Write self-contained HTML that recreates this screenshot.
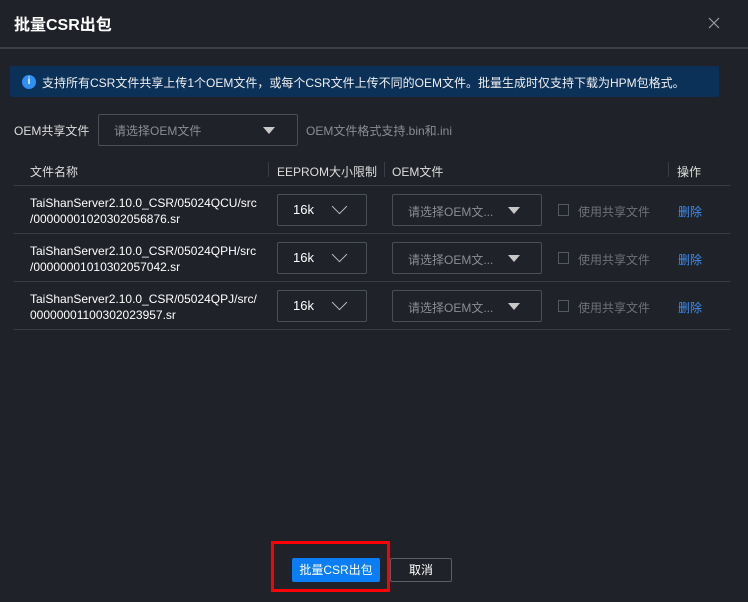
<!DOCTYPE html>
<html><head><meta charset="utf-8"><style>
*{margin:0;padding:0;box-sizing:border-box}
body{width:748px;height:602px;background:#202229;font-family:"Liberation Sans","Noto Sans CJK SC",sans-serif;color:#e8e8e8;position:relative;overflow:hidden;font-size:12px}
.a{position:absolute;white-space:nowrap}
.sel{position:absolute;border:1px solid #4a4e57;border-radius:2px}
.tri{position:absolute;width:0;height:0;border-left:6px solid transparent;border-right:6px solid transparent;border-top:7px solid #c8c8c8}
.hl{position:absolute;left:14px;width:716px;height:1px;background:#3a3d45}
.chev{position:absolute;width:11px;height:11px;border-right:1.5px solid #bbb;border-bottom:1.5px solid #bbb;transform:rotate(45deg)}
</style></head><body>
<div class="a" style="left:14px;top:11px;font-size:16px;font-weight:bold;color:#fff">批量CSR出包</div>
<svg style="position:absolute;left:708px;top:17px" width="12" height="12"><path d="M1 1L11 11M11 1L1 11" stroke="#9a9da4" stroke-width="1.2"/></svg>
<div style="position:absolute;left:0;top:47px;width:748px;height:2px;background:#3c3f47"></div>
<div style="position:absolute;left:10px;top:66px;width:709px;height:31px;background:#0b3158;border-radius:2px"></div>
<div style="position:absolute;left:22px;top:75px;width:14px;height:14px;border-radius:50%;background:#2f8ff5;color:#fff;font-size:10px;font-weight:bold;text-align:center;line-height:14px">i</div>
<div class="a" style="left:42px;top:74px;font-size:12px;color:#f0f0f0">支持所有CSR文件共享上传1个OEM文件，或每个CSR文件上传不同的OEM文件。批量生成时仅支持下载为HPM包格式。</div>
<div class="a" style="left:14px;top:122px;color:#ddd">OEM共享文件</div>
<div class="sel" style="left:98px;top:114px;width:200px;height:32px"></div>
<div class="a" style="left:114px;top:122px;color:#8a8d94">请选择OEM文件</div>
<div class="tri" style="left:263px;top:127px"></div>
<div class="a" style="left:306px;top:122px;color:#8a8d94">OEM文件格式支持.bin和.ini</div>
<div class="a" style="left:30px;top:163px;color:#ddd">文件名称</div>
<div style="position:absolute;left:268px;top:162px;width:1px;height:15px;background:#3a3d45"></div>
<div class="a" style="left:277px;top:163px;color:#ddd">EEPROM大小限制</div>
<div style="position:absolute;left:384px;top:162px;width:1px;height:15px;background:#3a3d45"></div>
<div class="a" style="left:392px;top:163px;color:#ddd">OEM文件</div>
<div style="position:absolute;left:668px;top:162px;width:1px;height:15px;background:#3a3d45"></div>
<div class="a" style="left:677px;top:163px;color:#ddd">操作</div>
<div class="hl" style="top:185px"></div>
<div class="hl" style="top:233px"></div>
<div class="hl" style="top:281px"></div>
<div class="hl" style="top:329px"></div>

<div class="a" style="left:30px;top:195px;line-height:16px;color:#fff">TaiShanServer2.10.0_CSR/05024QCU/src<br>/00000001020302056876.sr</div>
<div class="a" style="left:30px;top:243px;line-height:16px;color:#fff">TaiShanServer2.10.0_CSR/05024QPH/src<br>/00000001010302057042.sr</div>
<div class="a" style="left:30px;top:291px;line-height:16px;color:#fff">TaiShanServer2.10.0_CSR/05024QPJ/src/<br>00000001100302023957.sr</div>

<div class="sel" style="left:277px;top:194px;width:90px;height:32px"></div>
<div class="sel" style="left:277px;top:242px;width:90px;height:32px"></div>
<div class="sel" style="left:277px;top:290px;width:90px;height:32px"></div>
<div class="a" style="left:293px;top:202px;font-size:13px;color:#fff">16k</div>
<div class="a" style="left:293px;top:250px;font-size:13px;color:#fff">16k</div>
<div class="a" style="left:293px;top:298px;font-size:13px;color:#fff">16k</div>
<div class="chev" style="left:334px;top:201px"></div>
<div class="chev" style="left:334px;top:249px"></div>
<div class="chev" style="left:334px;top:297px"></div>

<div class="sel" style="left:392px;top:194px;width:150px;height:32px"></div>
<div class="sel" style="left:392px;top:242px;width:150px;height:32px"></div>
<div class="sel" style="left:392px;top:290px;width:150px;height:32px"></div>
<div class="a" style="left:408px;top:203px;color:#8a8d94">请选择OEM文...</div>
<div class="a" style="left:408px;top:251px;color:#8a8d94">请选择OEM文...</div>
<div class="a" style="left:408px;top:299px;color:#8a8d94">请选择OEM文...</div>
<div class="tri" style="left:508px;top:207px"></div>
<div class="tri" style="left:508px;top:255px"></div>
<div class="tri" style="left:508px;top:303px"></div>

<div style="position:absolute;left:558px;top:204px;width:11px;height:12px;border:1px solid #555961"></div>
<div style="position:absolute;left:558px;top:252px;width:11px;height:12px;border:1px solid #555961"></div>
<div style="position:absolute;left:558px;top:300px;width:11px;height:12px;border:1px solid #555961"></div>
<div class="a" style="left:578px;top:203px;color:#6e7179">使用共享文件</div>
<div class="a" style="left:578px;top:251px;color:#6e7179">使用共享文件</div>
<div class="a" style="left:578px;top:299px;color:#6e7179">使用共享文件</div>
<div class="a" style="left:678px;top:203px;color:#3d8ef0">删除</div>
<div class="a" style="left:678px;top:251px;color:#3d8ef0">删除</div>
<div class="a" style="left:678px;top:299px;color:#3d8ef0">删除</div>

<div style="position:absolute;left:271px;top:541px;width:119px;height:51px;border:3px solid #f00"></div>
<div style="position:absolute;left:292px;top:558px;width:88px;height:24px;background:#0c7ef5;border-radius:2px;color:#fff;text-align:center;line-height:24px">批量CSR出包</div>
<div style="position:absolute;left:390px;top:558px;width:62px;height:24px;border:1px solid #5a5e67;border-radius:2px;color:#fff;text-align:center;line-height:22px">取消</div>
</body></html>
